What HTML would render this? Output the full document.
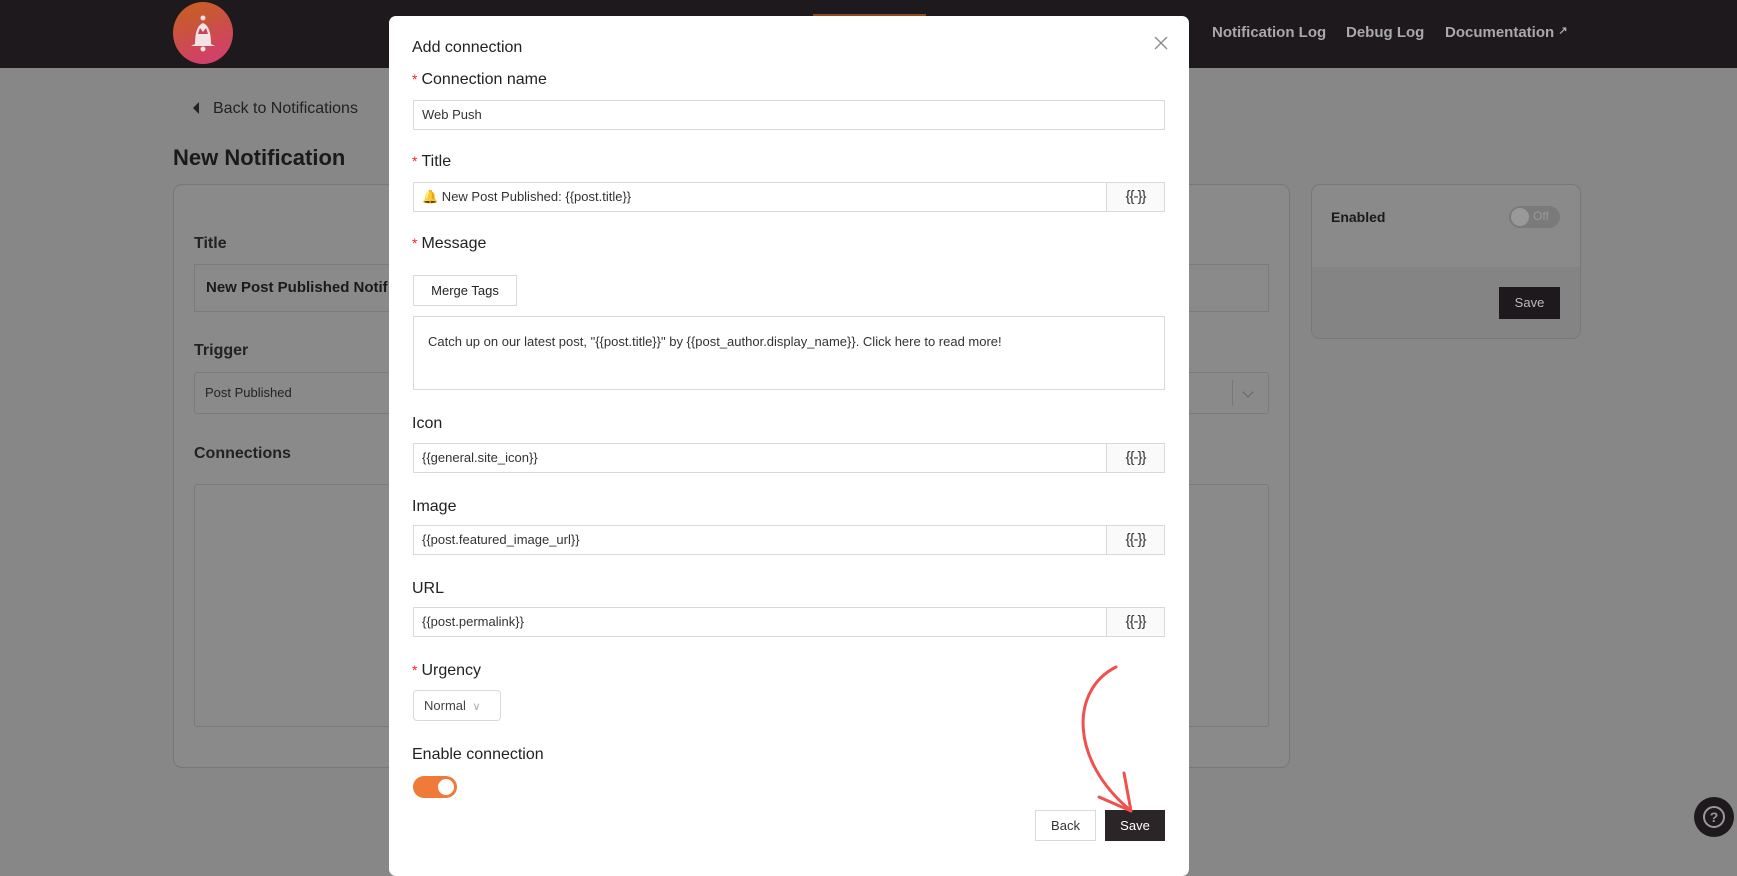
<!DOCTYPE html>
<html><head><meta charset="utf-8"><style>
*{box-sizing:border-box;margin:0;padding:0}
body{width:1737px;height:857px;overflow:hidden;background:#878787;font-family:"Liberation Sans",sans-serif;position:relative;color:#222}
.abs{position:absolute}
.hdr{left:0;top:0;width:1737px;height:68px;background:#1d191c}
.nav{top:24px;color:#a9a9a9;font-size:15px;font-weight:bold}
.card{border:1px solid #777;border-radius:9px;background:#8a8a8a}
.gin{border:1px solid #7a7a7a;background:#8a8a8a}
.modal{left:389px;top:16px;width:800px;height:860px;background:#fff;border-radius:7px}
.lbl{font-size:16px;color:#222}
.req{color:#f5222d;font-size:14px;margin-right:4px}
.inp{border:1px solid #d9d9d9;background:#fff;height:30px;font-size:13px;color:#333;padding:0 8px;line-height:28px;width:752px}
.add{position:absolute;right:-1px;top:-1px;width:59px;height:30px;border:1px solid #d9d9d9;background:#fafafa;text-align:center;font-size:15px;line-height:28px;color:#333;letter-spacing:-1px}
</style></head><body>
<div class="abs hdr"></div>
<div class="abs" style="left:173px;top:2px;width:60px;height:62px;border-radius:50%;background:linear-gradient(160deg,#c5621a,#d33a78)"></div>
<svg class="abs" style="left:186px;top:14px" width="34" height="38" viewBox="0 0 34 38"><circle cx="17" cy="4" r="2.5" fill="#f2e4e4"/><path d="M9 30 Q9 12 17 9 Q25 12 25 30 L29 32 L5 32 Z" fill="#f2e4e4"/><path d="M12 20 L14 14 L17 18 L20 14 L22 20 Z" fill="#c6425d"/><circle cx="17" cy="35" r="2.5" fill="#f2e4e4"/></svg>
<div class="abs" style="left:813px;top:14px;width:113px;height:3px;background:#8a4a22"></div>
<div class="abs nav" style="left:1212px">Notification Log</div>
<div class="abs nav" style="left:1346px">Debug Log</div>
<div class="abs nav" style="left:1445px">Documentation <span style="font-size:11px;vertical-align:top">↗</span></div>

<div class="abs" style="left:193px;top:102px;width:0;height:0;border-top:6px solid transparent;border-bottom:6px solid transparent;border-right:6px solid #222"></div>
<div class="abs" style="left:213px;top:100px;font-size:16px;color:#222">Back to Notifications</div>
<div class="abs" style="left:173px;top:145px;font-size:22px;font-weight:bold;color:#1a1a1a">New Notification</div>

<div class="abs card" style="left:173px;top:184px;width:1117px;height:584px"></div>
<div class="abs" style="left:194px;top:235px;font-size:16px;font-weight:bold;color:#222">Title</div>
<div class="abs gin" style="left:194px;top:264px;width:1075px;height:48px"></div>
<div class="abs" style="left:206px;top:279px;font-size:15px;font-weight:bold;color:#1a1a1a">New Post Published Notif</div>
<div class="abs" style="left:194px;top:342px;font-size:16px;font-weight:bold;color:#222">Trigger</div>
<div class="abs gin" style="left:194px;top:372px;width:1075px;height:42px;border-radius:3px"></div>
<div class="abs" style="left:205px;top:385px;font-size:13px;color:#222">Post Published</div>
<div class="abs" style="left:1232px;top:380px;width:1px;height:26px;background:#777"></div>
<div class="abs" style="left:1244px;top:388px;width:8px;height:8px;border-right:1.5px solid #666;border-bottom:1.5px solid #666;transform:rotate(45deg)"></div>
<div class="abs" style="left:194px;top:445px;font-size:16px;font-weight:bold;color:#222">Connections</div>
<div class="abs gin" style="left:194px;top:484px;width:1075px;height:243px;border-radius:3px"></div>

<div class="abs card" style="left:1311px;top:184px;width:270px;height:155px;overflow:hidden"><div style="position:absolute;left:0;top:82px;width:100%;height:80px;background:#848484"></div></div>
<div class="abs" style="left:1331px;top:209px;font-size:14px;font-weight:bold;color:#1a1a1a">Enabled</div>
<div class="abs" style="left:1509px;top:206px;width:51px;height:22px;border-radius:11px;background:#7a7a7a"><div style="position:absolute;left:2px;top:2px;width:18px;height:18px;border-radius:50%;background:#999"></div><span style="position:absolute;left:24px;top:3px;font-size:12px;color:#999">Off</span></div>
<div class="abs" style="left:1499px;top:287px;width:61px;height:32px;background:#1d191c;color:#bbb;font-size:13px;text-align:center;line-height:32px">Save</div>
<div class="abs" style="left:1694px;top:797px;width:40px;height:40px;border-radius:50%;background:#1d191c"></div>
<div class="abs" style="left:1703px;top:806px;width:22px;height:22px;border-radius:50%;border:2px solid #999;color:#999;font-size:14px;font-weight:bold;text-align:center;line-height:18px">?</div>

<div class="abs modal">
<div class="abs" style="left:23px;top:23px;font-size:16px;color:#222">Add connection</div>
<svg class="abs" style="left:765px;top:20px" width="14" height="14"><path d="M1 1L13 13M13 1L1 13" stroke="#888" stroke-width="1.3"/></svg>
<div class="abs lbl" style="left:23px;top:55px"><span class="req">*</span>Connection name</div>
<div class="abs inp" style="left:24px;top:84px">Web Push</div>
<div class="abs lbl" style="left:23px;top:137px"><span class="req">*</span>Title</div>
<div class="abs inp" style="left:24px;top:166px"><span style="font-size:13px">🔔</span> New Post Published: {{post.title}}<div class="add">{{-}}</div></div>
<div class="abs lbl" style="left:23px;top:219px"><span class="req">*</span>Message</div>
<div class="abs" style="left:24px;top:259px;width:104px;height:31px;border:1px solid #d9d9d9;font-size:13px;text-align:center;line-height:29px;color:#222">Merge Tags</div>
<div class="abs" style="left:24px;top:300px;width:752px;height:74px;border:1px solid #d9d9d9;font-size:13px;color:#333;padding:17px 14px">Catch up on our latest post, "{{post.title}}" by {{post_author.display_name}}. Click here to read more!</div>
<div class="abs lbl" style="left:23px;top:399px">Icon</div>
<div class="abs inp" style="left:24px;top:427px">{{general.site_icon}}<div class="add">{{-}}</div></div>
<div class="abs lbl" style="left:23px;top:482px">Image</div>
<div class="abs inp" style="left:24px;top:509px">{{post.featured_image_url}}<div class="add">{{-}}</div></div>
<div class="abs lbl" style="left:23px;top:564px">URL</div>
<div class="abs inp" style="left:24px;top:591px">{{post.permalink}}<div class="add">{{-}}</div></div>
<div class="abs lbl" style="left:23px;top:646px"><span class="req">*</span>Urgency</div>
<div class="abs" style="left:24px;top:674px;width:88px;height:31px;border:1px solid #d9d9d9;border-radius:4px;font-size:13px;color:#444;line-height:29px;padding-left:10px">Normal <span style="color:#aaa;font-size:11px;margin-left:3px">∨</span></div>
<div class="abs lbl" style="left:23px;top:730px">Enable connection</div>
<div class="abs" style="left:24px;top:760px;width:44px;height:22px;border-radius:11px;background:#f07a3a"><div style="position:absolute;right:3px;top:3px;width:16px;height:16px;border-radius:50%;background:#fff"></div></div>
<div class="abs" style="left:646px;top:794px;width:61px;height:31px;border:1px solid #d9d9d9;font-size:13px;text-align:center;line-height:29px;color:#333">Back</div>
<div class="abs" style="left:716px;top:794px;width:60px;height:31px;background:#2b2528;font-size:13px;text-align:center;line-height:31px;color:#fff">Save</div>
</div>
<svg class="abs" style="left:0;top:0" width="1737" height="857"><path d="M1116 667 C1070 690 1070 760 1130 810" fill="none" stroke="#f0504e" stroke-width="3" stroke-linecap="round"/><path d="M1099 797 L1131 811 L1124 773" fill="none" stroke="#f0504e" stroke-width="3" stroke-linecap="round" stroke-linejoin="round"/></svg>
</body></html>
